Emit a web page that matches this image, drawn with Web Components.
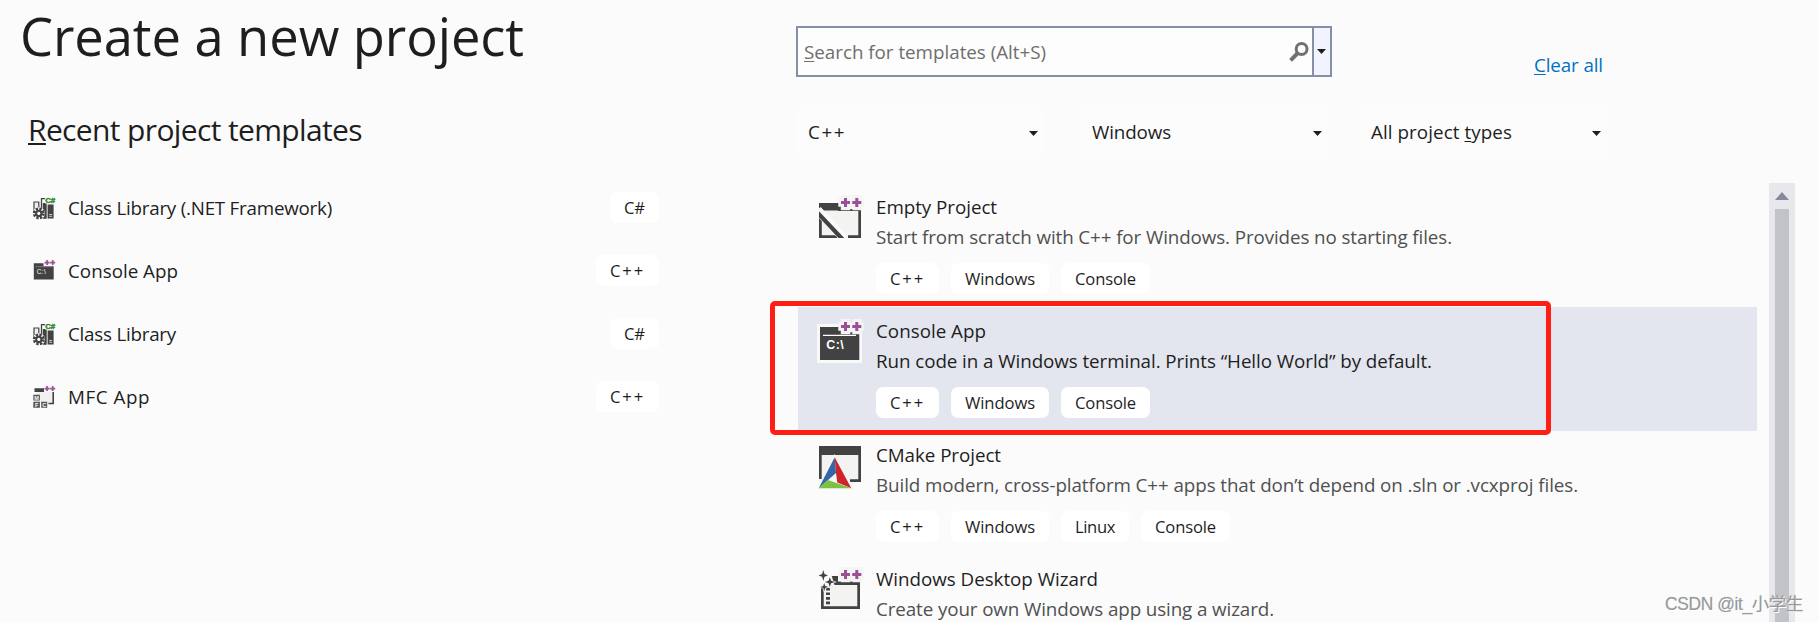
<!DOCTYPE html>
<html lang="en">
<head>
<meta charset="utf-8">
<title>Create a new project</title>
<style>
    html, body {
        margin: 0;
        height: 622px;
        overflow: hidden;
        background: #fbfbfb;
    }

    body {
        font-family: "Open Sans", "Noto Sans", "Noto Sans CJK SC", sans-serif;
        font-size: 18.8px;
        color: #1e1e1e;
    }

    u {
        text-decoration-thickness: 1px;
        text-underline-offset: 2px;
        text-decoration-skip-ink: none;
    }

    h1, h2 {
        margin: 0;
        font-weight: 400;
    }

    h1 {
        padding-left: 20px;
        font-size: 52.5px;
        line-height: 71px;
    }

    h2 {
        padding: 39px 0 26px 28px;
        font-size: 30px;
        line-height: 40px;
    }

    h2 u {
        text-decoration-thickness: 2px;
    }

    .link {
        line-height: 28px;
        color: #0070c6;
    }
</style>
</head>
<body>

<project-dialog>
    <h1 slot="recent"><fit-text width="504">Create a new project</fit-text></h1>
    <h2 slot="recent"><fit-text width="334"><u>R</u>ecent project templates</fit-text></h2>

    <recent-item slot="recent" icon="library">
        <fit-text width="264">Class Library (.NET Framework)</fit-text>
        <lang-tag slot="tag"><fit-text width="21">C#</fit-text></lang-tag>
    </recent-item>
    <recent-item slot="recent" icon="console-small">
        <fit-text width="110">Console App</fit-text>
        <lang-tag slot="tag"><fit-text width="35">C++</fit-text></lang-tag>
    </recent-item>
    <recent-item slot="recent" icon="library">
        <fit-text width="108">Class Library</fit-text>
        <lang-tag slot="tag"><fit-text width="21">C#</fit-text></lang-tag>
    </recent-item>
    <recent-item slot="recent" icon="mfc">
        <fit-text width="82">MFC App</fit-text>
        <lang-tag slot="tag"><fit-text width="35">C++</fit-text></lang-tag>
    </recent-item>

    <search-box slot="header"><fit-text width="242"><u>S</u>earch for templates (Alt+S)</fit-text></search-box>
    <div class="link" slot="header"><fit-text width="69"><u>C</u>lear all</fit-text></div>

    <filter-select slot="filter"><fit-text width="38">C++</fit-text></filter-select>
    <filter-select slot="filter"><fit-text width="79">Windows</fit-text></filter-select>
    <filter-select slot="filter"><fit-text width="141">All project <u>t</u>ypes</fit-text></filter-select>

    <template-item icon="empty">
        <fit-text slot="name" width="121">Empty Project</fit-text>
        <fit-text slot="text" width="576">Start from scratch with C++ for Windows. Provides no starting files.</fit-text>
        <lang-tag><fit-text width="35">C++</fit-text></lang-tag>
        <lang-tag><fit-text width="70">Windows</fit-text></lang-tag>
        <lang-tag><fit-text width="61">Console</fit-text></lang-tag>
    </template-item>
    <template-item icon="console" selected>
        <fit-text slot="name" width="110">Console App</fit-text>
        <fit-text slot="text" width="556">Run code in a Windows terminal. Prints “Hello World” by default.</fit-text>
        <lang-tag><fit-text width="35">C++</fit-text></lang-tag>
        <lang-tag><fit-text width="70">Windows</fit-text></lang-tag>
        <lang-tag><fit-text width="61">Console</fit-text></lang-tag>
    </template-item>
    <template-item icon="cmake">
        <fit-text slot="name" width="125">CMake Project</fit-text>
        <fit-text slot="text" width="702">Build modern, cross-platform C++ apps that don’t depend on .sln or .vcxproj files.</fit-text>
        <lang-tag><fit-text width="35">C++</fit-text></lang-tag>
        <lang-tag><fit-text width="70">Windows</fit-text></lang-tag>
        <lang-tag><fit-text width="40">Linux</fit-text></lang-tag>
        <lang-tag><fit-text width="61">Console</fit-text></lang-tag>
    </template-item>
    <template-item icon="wizard">
        <fit-text slot="name" width="222">Windows Desktop Wizard</fit-text>
        <fit-text slot="text" width="398">Create your own Windows app using a wizard.</fit-text>
    </template-item>
</project-dialog>

<mark-box></mark-box>
<water-mark><fit-text width="138">CSDN @it_小学生</fit-text></water-mark>

<script>
    /* purple ++ badge shared by the C++ icons, 48 unit grid */
    const PLUS = `
        <path d="M22.3 4.3h2.5V1h9.5v3.3h2V1h9.5v3.3h2v8.5h-2v3.4h-9.5v-2h-2v2h-9.5v-3.4h-2.5z" fill="#f4f4f2"/>
        <path d="M25 8.5h9M29.5 4v9M36.3 8.5h9M40.8 4v9" stroke="#9b4f96" stroke-width="3"/>
    `;

    /* same badge on the 22 unit grid */
    const PLUS_SMALL = `
        <path d="M11 2.6h6M16 2.6h6" stroke="#f4f4f2" stroke-width="6"/>
        <path d="M11.6 2.6h5M14.1 .1v5M17.2 2.6h5M19.7 .1v5" stroke="#9b4f96" stroke-width="1.6"/>
    `;

    const ICONS = {
        'empty': { size: 48, art: `
            <path d="M5 16h38v26H5z" fill="#f3f3f1"/>
            <path d="M3 9h22v7.5H3zM22 15h23v2H22zM42.3 16H45v28h-2.7zM32 41.2h13V44H32zM3 41.2h18V44H3zM3 24h2.8v20H3z" fill="#424242"/>
            <path d="M1.5 16L29 45.5" stroke="#fbfbfb" stroke-width="8.5"/>
            <path d="M3 17.2L28.3 44h-5.9L3 23.2z" fill="#424242"/>
            ${PLUS}` },
        'console': { size: 48, art: `
            <path d="M1 6h45v39H1z" fill="#f9f9f9"/>
            <path d="M4 9h39.3v33H4z" fill="#424242"/>
            <path d="M7 17.3h33" stroke="#fff" stroke-width="1.2"/>
            <text x="10.3" y="31.2" textLength="17.5" font-size="12.4" font-weight="700" font-family="Liberation Sans" fill="#fff">C:\\</text>
            ${PLUS}` },
        'cmake': { size: 48, art: `
            <path d="M5 12h38v26H5z" fill="#f3f3f1"/>
            <path d="M3 4h42v9H3zM3 12h2.7v25H3zM42.3 12H45v28h-2.7zM34 37.2h11V40H34z" fill="#424242"/>
            <path d="M18.7 15.3L2.7 46.3h32.6z" fill="#f7f7f7" stroke="#f7f7f7" stroke-width="3"/>
            <path d="M18.7 15.3L2.7 46.3 20 31z" fill="#3467a8"/>
            <path d="M18.7 15.3L35.3 46.3 21.3 40.4 20 31z" fill="#d0242c"/>
            <path d="M2.7 46.3L12 38l23.3 8.3z" fill="#7dc143"/>` },
        'wizard': { size: 48, art: `
            <path d="M7 18h36v24H7z" fill="#f3f3f1"/>
            <path d="M15.7 10H22v5.5h22V43H5V22h2.7v18.2h33.6V19H18.5z" fill="#424242"/>
            <path d="M12 21.8v16.8" stroke="#424242" stroke-width="4" stroke-dasharray="2.7 1.9"/>
            <path d="M7.3 4l1.2 4 3.5 1.4-3.5 1.4-1.2 4.2-1.2-4.2-3.5-1.4L6.1 8zM13.8 11.2l1.3 3.6 3.9 1.3-3.9 1.2-1.3 3.7-1.2-3.7-3.7-1.2 3.7-1.3zM8.2 17l1 3.1 3.1 1-3.1 1-1 3.1-1-3.1-3.1-1 3.1-1z" fill="#424242" stroke="#fbfbfb" stroke-width="1.2" paint-order="stroke"/>
            ${PLUS}` },
        'console-small': { size: 22, art: `
            <path d="M.8 3.2h9.7v3h10.2v13.4H.8z" fill="#424242"/>
            <path d="M2.5 6.7h16.8" stroke="#8a8a8a" stroke-width=".8"/>
            <text x="3.8" y="14.4" textLength="9" font-size="6.6" font-family="Liberation Sans" fill="#fff">C:\\</text>
            ${PLUS_SMALL}` },
        'library': { size: 22, art: `
            <path d="M1 5h4.8v8H1z" fill="#f0f0f0" stroke="#424242" stroke-width="1.2"/>
            <path d="M8.5 13V1.6h4" stroke="#424242" stroke-width="1.3"/>
            <path d="M9.8 6h3.9v15.7H9.8zM14.6 7.4h6V21.5h-6z" fill="#424242"/>
            <path d="M16.2 17.5h2.9M16.2 19.3h2.9" stroke="#ddd" stroke-width=".9"/>
            <circle cx="5.8" cy="16.4" r="6.2" fill="#fbfbfb"/>
            <circle cx="5.8" cy="16.4" r="4.4" stroke="#424242" stroke-width="3.2" stroke-dasharray="2.2 1.256"/>
            <circle cx="5.8" cy="16.4" r="2.6" stroke="#424242" stroke-width="2"/>
            <path d="M12 0h10v6.5H12z" fill="#fbfbfb"/>
            <text x="12.3" y="5.7" textLength="9.7" font-size="7.8" font-weight="700" font-family="Liberation Sans" fill="#388a34" stroke="#388a34" stroke-width=".5">C#</text>` },
        'mfc': { size: 22, art: `
            <path d="M4 6h15v11H4z" fill="#f0f0f0"/>
            <path d="M1.5 2.3H11V6H1.5zM19.4 6H21v12.3h-5.5v-1.6h3.9z" fill="#424242"/>
            <path d="M.3 8.7h6.6v5.8H.3zM.3 15.7h6.6v6H.3zM8.2 15.7h6v6h-6z" fill="#555"/>
            <g font-size="5.6" font-weight="700" font-family="Liberation Sans" fill="#fff">
                <text x="1.2" y="13.6">M</text><text x="1.9" y="20.7">F</text><text x="9.2" y="20.7">C</text>
            </g>
            ${PLUS_SMALL}` },
    };

    class BaseElement extends HTMLElement {
        css = () => ``;
        template = () => `<slot></slot>`;

        connectedCallback() {
            if(!this.shadowRoot) this.attachShadow({ mode: 'open' });
            this.shadowRoot.innerHTML = `
                <style>${this.css().trim()}</style>
                ${this.template().trim()}
            `;
        }
    }

    class ProjectDialog extends BaseElement {
        css = () => `
            :host { display: grid; grid-template-columns: 796px 1fr; height: 622px; }
            .side { padding-right: 137px; }
            .main { display: flex; flex-direction: column; min-width: 0; height: 622px; overflow: hidden; }
            header { display: flex; gap: 202px; box-sizing: border-box; height: 109px; padding-top: 26px; align-items: flex-start; }
            header ::slotted(.link) { margin-top: 25px; }
            .filters { display: grid; grid-template-columns: 284px 279px 246px; padding-left: 1px; }
            .body { display: flex; flex: 1; gap: 12px; min-height: 0; margin-top: 28px; padding-left: 2px; }
            .list { width: 959px; overflow: hidden; }
        `;
        template = () => `
            <section class="side"><slot name="recent"></slot></section>
            <section class="main">
                <header><slot name="header"></slot></header>
                <div class="filters"><slot name="filter"></slot></div>
                <div class="body">
                    <div class="list"><slot></slot></div>
                    <scroll-bar></scroll-bar>
                </div>
            </section>
        `;
    }

    class UiIcon extends BaseElement {
        css = () => `
            :host { display: block; flex: none; }
            svg { display: block; overflow: visible; }
        `;
        template = () => {
            const { size, art } = ICONS[this.getAttribute('name')];
            return `<svg width="${size}" height="${size}" viewBox="0 0 ${size} ${size}" fill="none">${art}</svg>`;
        }
    }

    class RecentItem extends BaseElement {
        css = () => `
            :host { display: flex; align-items: center; height: 63px; padding-left: 33px; }
            .name { flex: 1; padding-left: 13px; line-height: 30px; }
        `;
        template = () => `
            <ui-icon name="${this.getAttribute('icon')}"></ui-icon>
            <div class="name"><slot></slot></div>
            <slot name="tag"></slot>
        `;
    }

    class LangTag extends BaseElement {
        css = () => `
            :host {
                display: block;
                box-sizing: border-box;
                height: 31px;
                padding: 0 14px;
                border-radius: 7px;
                background: #fff;
                color: #1e1e1e;
                font-size: 16.6px;
                line-height: 31px;
            }
        `;
    }

    class SearchBox extends BaseElement {
        css = () => `
            :host {
                display: flex;
                box-sizing: border-box;
                width: 536px;
                height: 51px;
                border: 2px solid #858fa6;
                background: #fdfdfd;
                color: #6e6e6e;
            }
            .text { flex: 1; padding-left: 6px; line-height: 48px; }
            .glass { margin: 13px 3px 0 0; }
            .drop { display: flex; align-items: center; box-sizing: border-box; width: 18px; padding-left: 3px; border-left: 2px solid #858fa6; background: #f1f4fe; }
            .drop svg { margin-bottom: 1px; }
        `;
        template = () => `
            <div class="text"><slot></slot></div>
            <svg class="glass" width="20" height="22" fill="none" stroke="#717171">
                <circle cx="12.6" cy="8" r="5.4" stroke-width="3"/>
                <path d="M8.8 12L1.6 19.3" stroke-width="4"/>
            </svg>
            <div class="drop"><svg width="9" height="5"><path d="M0 0h9L4.5 5z" fill="#1e1e1e"/></svg></div>
        `;
    }

    class FilterSelect extends BaseElement {
        css = () => `
            :host {
                display: flex;
                align-items: center;
                justify-content: space-between;
                box-sizing: border-box;
                width: 246px;
                height: 46px;
                padding: 0 5px 0 11px;
                background: #fcfcfc;
            }
            div { line-height: 46px; }
            svg { margin-top: 2px; }
        `;
        template = () => `
            <div><slot></slot></div>
            <svg width="9" height="5"><path d="M0 0h9L4.5 5z" fill="#1e1e1e"/></svg>
        `;
    }

    class TemplateItem extends BaseElement {
        css = () => `
            :host { display: flex; gap: 12px; box-sizing: border-box; height: 124px; padding: 9px 0 0 18px; }
            :host([selected]) { background: #e3e6ee; }
            ui-icon { margin-top: 2px; }
            .name, .text { line-height: 30px; white-space: nowrap; }
            .text { color: #505050; }
            :host([selected]) .text { color: #1e1e1e; }
            .tags { display: flex; gap: 12px; margin-top: 11px; }
        `;
        template = () => `
            <ui-icon name="${this.getAttribute('icon')}"></ui-icon>
            <div>
                <div class="name"><slot name="name"></slot></div>
                <div class="text"><slot name="text"></slot></div>
                <div class="tags"><slot></slot></div>
            </div>
        `;
    }

    class ScrollBar extends BaseElement {
        css = () => `
            :host { display: flex; flex-direction: column; align-items: center; width: 26px; background: #e7e7ec; }
            svg { flex: none; margin: 9px 0; }
            .thumb { flex: 1; width: 14px; background: #c2c3c9; }
        `;
        template = () => `
            <svg width="14" height="8"><path d="M0 8L7 0l7 8z" fill="#868999"/></svg>
            <div class="thumb"></div>
        `;
    }

    class MarkBox extends BaseElement {
        css = () => `
            :host {
                position: absolute;
                left: 770px;
                top: 301px;
                box-sizing: border-box;
                width: 781px;
                height: 134px;
                border: 5px solid #ff1e12;
                border-radius: 5px;
            }
        `;
    }

    class WaterMark extends BaseElement {
        css = () => `
            :host {
                position: absolute;
                left: 1665px;
                top: 590px;
                font: 17.5px/28px "Liberation Sans", "Noto Sans CJK SC", sans-serif;
                color: #999;
                text-shadow: 1px 1px 0 #fff, 0 0 1px #bbb;
            }
        `;
    }

    /* spreads or tightens its letters until the line has the given width */
    class FitText extends BaseElement {
        css = () => `
            :host { display: inline-block; white-space: nowrap; }
        `;

        connectedCallback() {
            super.connectedCallback();
            const width = Number(this.getAttribute('width'));
            const natural = this.getBoundingClientRect().width;
            this.style.letterSpacing = `${(width - natural) / this.textContent.length}px`;
        }
    }

    customElements.define('project-dialog', ProjectDialog);
    customElements.define('ui-icon', UiIcon);
    customElements.define('recent-item', RecentItem);
    customElements.define('lang-tag', LangTag);
    customElements.define('search-box', SearchBox);
    customElements.define('filter-select', FilterSelect);
    customElements.define('template-item', TemplateItem);
    customElements.define('scroll-bar', ScrollBar);
    customElements.define('mark-box', MarkBox);
    customElements.define('water-mark', WaterMark);
    customElements.define('fit-text', FitText);
</script>
</body>
</html>
